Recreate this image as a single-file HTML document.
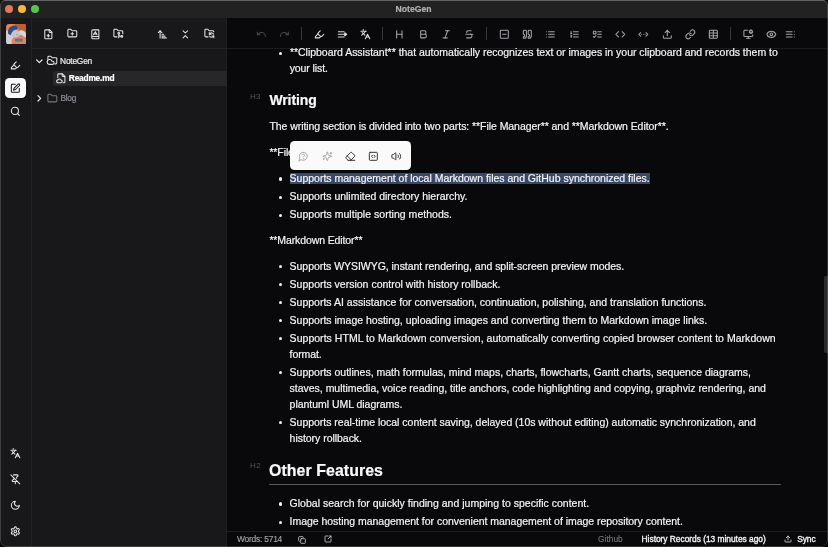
<!DOCTYPE html>
<html lang="en">
<head>
<meta charset="utf-8">
<title>NoteGen</title>
<style>
*{box-sizing:border-box;margin:0;padding:0}
html,body{width:828px;height:547px;overflow:hidden;background:#000}
body{font-family:"Liberation Sans",sans-serif;color:#f4f4f5;position:relative}
#win{position:absolute;left:0;top:0;width:828px;height:547px;background:#09090b;border-radius:5px 5px 6.5px 6.5px;overflow:hidden;will-change:transform}
#frame{position:absolute;left:0;top:0;width:828px;height:547px;border-radius:5px 5px 6.5px 6.5px;border:1px solid rgba(255,255,255,.17);border-top-color:rgba(255,255,255,.3);pointer-events:none}
#title{position:absolute;left:0;top:0;width:828px;height:17.8px;background:#222223}
.tl{position:absolute;top:5px;width:8.2px;height:8.2px;border-radius:50%}
#rail{position:absolute;left:0;top:17.8px;width:31.5px;height:530px;background:#18181b;border-right:1px solid #242427}
#side{position:absolute;left:31.5px;top:17.8px;width:195.5px;height:530px;background:#18181b;border-right:1px solid #202023}
#sidehead{position:absolute;left:31.5px;top:18px;width:195px;height:31px;border-bottom:1px solid #242427}
#status{position:absolute;left:227px;top:530.8px;width:601px;height:16.2px;border-top:1px solid #1c1c1f;background:#09090b}
svg.i{position:absolute;fill:none;stroke:#e4e4e7;color:#e4e4e7;stroke-width:2.35;stroke-linecap:round;stroke-linejoin:round;overflow:visible}
.t,.x{position:absolute;white-space:nowrap;font-size:10.5px;line-height:16px;color:#f4f4f5;-webkit-text-stroke:.2px currentColor}
.sel{background:linear-gradient(#3a4868,#3a4868) 0 2.7px/100% 11px no-repeat}
.bu{position:absolute;left:278.5px;width:3.1px;height:3.1px;border-radius:50%;background:#f4f4f5}
.sep{position:absolute;top:27.2px;width:1px;height:12.6px;background:#38383c}
#pop{position:absolute;left:289.6px;top:141.4px;width:121.6px;height:28.3px;background:#fafafa;border-radius:4.5px}
</style>
</head>
<body>
<div id="win">
<div id="title"><span class="tl" style="left:5px;background:#dd7a5d"></span><span class="tl" style="left:17.9px;background:#f3b745"></span><span class="tl" style="left:30.9px;background:#57c254"></span></div>
<span class="x" style="left:395.6px;top:3.1px;font-size:8.6px;line-height:12px;font-weight:bold;color:#b2b2b4">NoteGen</span>
<div id="rail"></div><div id="side"></div><div id="sidehead"></div>
<svg style="position:absolute;left:5.5px;top:23.6px;width:20.6px;height:20.5px" viewBox="0 0 40 40"><defs><clipPath id="av"><rect width="40" height="40" rx="6"/></clipPath></defs><g clip-path="url(#av)"><rect width="40" height="40" fill="#e1835c"/><path d="M16 0H40V18L33 14L27 13L22 7Z" fill="#b96231"/><path d="M0 13L5 12L9 20L15 26L11 31L11 40H0Z" fill="#cfd0d5"/><path d="M25 15C28 10 36 12 39 18L40 26L35 25L30 21L26 22Z" fill="#d4d5da"/><ellipse cx="17.5" cy="19" rx="8.5" ry="7.5" fill="#c6c7cc"/><path d="M4 19C2 10 9 3 16 3C21 3 24 7 22 10C16 10 11 14 9 22Z" fill="#2f4d80"/><path d="M20 19l3 2-2 2z" fill="#d46a3c"/><rect x="18.500" y="29.500" width="13" height="4" rx=".5" fill="#5f83a4" stroke="#3d4f63" stroke-width=".8"/></g></svg>
<svg class="i" viewBox="0 0 24 24" style="left:10.36px;top:59.76px;width:10.67px;height:10.67px"><path d="m9 11-6 6v3h9l3-3"/><path d="m22 12-4.6 4.6a2 2 0 0 1-2.8 0l-5.2-5.2a2 2 0 0 1 0-2.8L14 4"/></svg>
<div style="position:absolute;left:5.2px;top:77.8px;width:20.8px;height:20.6px;background:#fafafa;border-radius:4.5px"></div>
<svg class="i" viewBox="0 0 24 24" style="left:10.27px;top:82.77px;width:10.67px;height:10.67px;stroke:#18181b;color:#18181b"><path d="M12 3H5a2 2 0 0 0-2 2v14a2 2 0 0 0 2 2h14a2 2 0 0 0 2-2v-7"/><path d="M18.375 2.625a1 1 0 0 1 3 3l-9.013 9.014a2 2 0 0 1-.853.505l-2.873.840a.5.5 0 0 1-.620-.620l.840-2.873a2 2 0 0 1 .506-.852z"/></svg>
<svg class="i" viewBox="0 0 24 24" style="left:10.27px;top:105.97px;width:10.67px;height:10.67px"><circle cx="11" cy="11" r="8"/><path d="m21 21-4.300-4.300"/></svg>
<svg class="i" viewBox="0 0 24 24" style="left:10.27px;top:448.47px;width:10.67px;height:10.67px"><path d="m5 8 6 6"/><path d="m4 14 6-6 2-3"/><path d="M2 5h12"/><path d="M7 2h1"/><path d="m22 22-5-10-5 10"/><path d="M14 18h6"/></svg>
<svg class="i" viewBox="0 0 24 24" style="left:10.27px;top:474.27px;width:10.67px;height:10.67px"><path d="M12 17v5"/><path d="M15 9.340V7a1 1 0 0 1 1-1 2 2 0 0 0 0-4H7.890"/><path d="m2 2 20 20"/><path d="M9 9v1.760a2 2 0 0 1-1.110 1.790l-1.780.9A2 2 0 0 0 5 15.240V16a1 1 0 0 0 1 1h11"/></svg>
<svg class="i" viewBox="0 0 24 24" style="left:10.27px;top:500.27px;width:10.67px;height:10.67px"><path d="M12 3a6 6 0 0 0 9 9 9 9 0 1 1-9-9Z"/></svg>
<svg class="i" viewBox="0 0 24 24" style="left:10.27px;top:526.26px;width:10.67px;height:10.67px"><path d="M12.220 2h-.44a2 2 0 0 0-2 2v.180a2 2 0 0 1-1 1.730l-.430.250a2 2 0 0 1-2 0l-.150-.080a2 2 0 0 0-2.730.730l-.220.380a2 2 0 0 0 .730 2.730l.150.100a2 2 0 0 1 1 1.720v.510a2 2 0 0 1-1 1.740l-.150.090a2 2 0 0 0-.730 2.730l.220.380a2 2 0 0 0 2.730.730l.150-.080a2 2 0 0 1 2 0l.430.250a2 2 0 0 1 1 1.730V20a2 2 0 0 0 2 2h.440a2 2 0 0 0 2-2v-.180a2 2 0 0 1 1-1.730l.430-.250a2 2 0 0 1 2 0l.150.080a2 2 0 0 0 2.730-.730l.220-.390a2 2 0 0 0-.730-2.730l-.150-.080a2 2 0 0 1-1-1.740v-.5a2 2 0 0 1 1-1.740l.150-.090a2 2 0 0 0 .730-2.730l-.220-.380a2 2 0 0 0-2.730-.730l-.150.080a2 2 0 0 1-2 0l-.430-.250a2 2 0 0 1-1-1.730V4a2 2 0 0 0-2-2z"/><circle cx="12" cy="12" r="3"/></svg>
<svg class="i" viewBox="0 0 24 24" style="left:43.16px;top:28.56px;width:10.67px;height:10.67px"><path d="M15 2H6a2 2 0 0 0-2 2v16a2 2 0 0 0 2 2h12a2 2 0 0 0 2-2V7Z"/><path d="M14 2v4a2 2 0 0 0 2 2h4"/><path d="M9 15h6"/><path d="M12 18v-6"/></svg>
<svg class="i" viewBox="0 0 24 24" style="left:66.97px;top:28.27px;width:10.67px;height:10.67px"><path d="M12 10v6"/><path d="M9 13h6"/><path d="M20 20a2 2 0 0 0 2-2V8a2 2 0 0 0-2-2h-7.900a2 2 0 0 1-1.690-.9L9.600 3.900A2 2 0 0 0 7.930 3H4a2 2 0 0 0-2 2v13a2 2 0 0 0 2 2Z"/></svg>
<svg class="i" viewBox="0 0 24 24" style="left:89.67px;top:28.56px;width:10.67px;height:10.67px"><path d="M4 19.500v-15A2.500 2.500 0 0 1 6.500 2H19a1 1 0 0 1 1 1v18a1 1 0 0 1-1 1H6.500a1 1 0 0 1 0-5H20"/><path d="m8 13 4-7 4 7"/><path d="M9.100 11h5.700"/></svg>
<svg class="i" viewBox="0 0 24 24" style="left:112.97px;top:28.46px;width:10.67px;height:10.67px"><path d="M9 20H4a2 2 0 0 1-2-2V5a2 2 0 0 1 2-2h3.900a2 2 0 0 1 1.690.9l.810 1.200a2 2 0 0 0 1.670.9H20a2 2 0 0 1 2 2v5"/><circle cx="13" cy="12" r="2"/><path d="M18 19c-2.800 0-5-2.200-5-5v8"/><circle cx="20" cy="19" r="2"/></svg>
<svg class="i" viewBox="0 0 24 24" style="left:157.16px;top:28.56px;width:10.67px;height:10.67px"><path d="m3 8 4-4 4 4"/><path d="M7 4v16"/><path d="M11 12h4"/><path d="M11 16h7"/><path d="M11 20h10"/></svg>
<svg class="i" viewBox="0 0 24 24" style="left:180.36px;top:28.56px;width:10.67px;height:10.67px"><path d="m7 20 5-5 5 5"/><path d="m7 4 5 5 5-5"/></svg>
<svg class="i" viewBox="0 0 24 24" style="left:203.66px;top:28.46px;width:10.67px;height:10.67px"><path d="M9 20H4a2 2 0 0 1-2-2V5a2 2 0 0 1 2-2h3.900a2 2 0 0 1 1.690.9l.810 1.200a2 2 0 0 0 1.670.9H20a2 2 0 0 1 2 2v.5"/><path d="M12 10v4h4"/><path d="m12 14 1.535-1.605a5 5 0 0 1 8 1.500"/><path d="M22 22v-4h-4"/><path d="m22 18-1.535 1.605a5 5 0 0 1-8-1.500"/></svg>
<div style="position:absolute;left:53px;top:71.2px;width:173.5px;height:15px;background:#27272a;border-radius:2px 0 0 2px"></div>
<svg class="i" viewBox="0 0 24 24" style="left:34.16px;top:55.87px;width:10.67px;height:10.67px;stroke-width:2.8"><path d="m6 9 6 6 6-6"/></svg>
<svg class="i" viewBox="0 0 24 24" style="left:46.96px;top:55.46px;width:10.67px;height:10.67px"><path d="M17.500 20H20a2 2 0 0 0 2-2V8a2 2 0 0 0-2-2h-7.900a2 2 0 0 1-1.690-.9L9.600 3.900A2 2 0 0 0 7.930 3H4a2 2 0 0 0-2 2v5"/><path transform="translate(-1.100 6.300) scale(.78)" stroke-width="3" d="M17.500 19H9a7 7 0 1 1 6.710-9h1.790a4.500 4.500 0 1 1 0 9Z"/></svg>
<span class="x" style="left:60.1px;top:55.1px;font-size:8.4px;line-height:12px;color:#ececef;letter-spacing:-0.233px">NoteGen</span>
<svg class="i" viewBox="0 0 24 24" style="left:55.66px;top:73.27px;width:10.67px;height:10.67px"><path d="M4 10V4a2 2 0 0 1 2-2h8.500L20 7.500V20a2 2 0 0 1-2 2h-2"/><path d="M14 2v4a2 2 0 0 0 2 2h4"/><path d="M5.500 22H11a3 3 0 0 0 .3-5.980A4 4 0 0 0 4 15.500 3.300 3.300 0 0 0 5.500 22Z"/></svg>
<span class="x" style="left:68.8px;top:72.1px;font-size:8.4px;line-height:12px;font-weight:bold;color:#fff;letter-spacing:-0.220px">Readme.md</span>
<svg class="i" viewBox="0 0 24 24" style="left:34.37px;top:92.67px;width:10.67px;height:10.67px;stroke:#e4e4e7;color:#e4e4e7;stroke-width:2.8"><path d="m9 18 6-6-6-6"/></svg>
<svg class="i" viewBox="0 0 24 24" style="left:46.96px;top:92.77px;width:10.67px;height:10.67px;stroke:#75757c;color:#75757c"><path d="M20 20a2 2 0 0 0 2-2V8a2 2 0 0 0-2-2h-7.900a2 2 0 0 1-1.690-.9L9.600 3.900A2 2 0 0 0 7.930 3H4a2 2 0 0 0-2 2v13a2 2 0 0 0 2 2Z"/></svg>
<span class="x" style="left:60.4px;top:92.1px;font-size:8.4px;line-height:12px;color:#8b8b92;letter-spacing:-0.241px">Blog</span>
<div style="position:absolute;left:227px;top:17.8px;width:601px;height:30.2px;background:#09090b"></div><div style="position:absolute;left:227px;top:48.2px;width:601px;height:1px;background:#1b1b1e"></div>
<span class="t" style="left:289.9px;top:44.1px;letter-spacing:-0.017px">**Clipboard Assistant** that automatically recognizes text or images in your clipboard and records them to</span>
<span class="t" style="left:289.7px;top:60.1px;letter-spacing:-0.089px">your list.</span>
<span class="t" style="left:269.4px;top:118.1px;letter-spacing:-0.059px">The writing section is divided into two parts: **File Manager** and **Markdown Editor**.</span>
<span class="t" style="left:269.4px;top:144.1px;letter-spacing:-0.108px">**File Manager**</span>
<span class="t sel" style="left:289.6px;top:170.1px;font-size:10.5px;line-height:16px;letter-spacing:-0.009px">Supports management of local Markdown files and GitHub synchronized files.</span>
<span class="t" style="left:289.6px;top:188.1px;letter-spacing:-0.015px">Supports unlimited directory hierarchy.</span>
<span class="t" style="left:289.6px;top:206.1px;letter-spacing:0.021px">Supports multiple sorting methods.</span>
<span class="t" style="left:269.4px;top:232.1px;letter-spacing:-0.113px">**Markdown Editor**</span>
<span class="t" style="left:289.6px;top:258.1px;letter-spacing:-0.040px">Supports WYSIWYG, instant rendering, and split-screen preview modes.</span>
<span class="t" style="left:289.6px;top:276.1px;letter-spacing:0.005px">Supports version control with history rollback.</span>
<span class="t" style="left:289.6px;top:294.1px">Supports AI assistance for conversation, continuation, polishing, and translation functions.</span>
<span class="t" style="left:289.6px;top:312.1px;letter-spacing:-0.004px">Supports image hosting, uploading images and converting them to Markdown image links.</span>
<span class="t" style="left:289.6px;top:330.1px;letter-spacing:0.033px">Supports HTML to Markdown conversion, automatically converting copied browser content to Markdown</span>
<span class="t" style="left:289.6px;top:346.1px;letter-spacing:-0.098px">format.</span>
<span class="t" style="left:289.6px;top:364.1px;letter-spacing:-0.002px">Supports outlines, math formulas, mind maps, charts, flowcharts, Gantt charts, sequence diagrams,</span>
<span class="t" style="left:289.6px;top:380.1px;letter-spacing:-0.017px">staves, multimedia, voice reading, title anchors, code highlighting and copying, graphviz rendering, and</span>
<span class="t" style="left:289.6px;top:396.1px;letter-spacing:-0.032px">plantuml UML diagrams.</span>
<span class="t" style="left:289.6px;top:414.1px;letter-spacing:-0.019px">Supports real-time local content saving, delayed (10s without editing) automatic synchronization, and</span>
<span class="t" style="left:289.6px;top:430.1px;letter-spacing:-0.033px">history rollback.</span>
<span class="t" style="left:289.6px;top:495.1px;letter-spacing:0.011px">Global search for quickly finding and jumping to specific content.</span>
<span class="t" style="left:289.6px;top:513.1px;letter-spacing:-0.032px">Image hosting management for convenient management of image repository content.</span>
<i class="bu" style="top:51.95px"></i>
<i class="bu" style="top:177.45px"></i>
<i class="bu" style="top:195.55px"></i>
<i class="bu" style="top:213.65px"></i>
<i class="bu" style="top:265.35px"></i>
<i class="bu" style="top:283.35px"></i>
<i class="bu" style="top:301.35px"></i>
<i class="bu" style="top:319.35px"></i>
<i class="bu" style="top:337.35px"></i>
<i class="bu" style="top:371.35px"></i>
<i class="bu" style="top:421.15px"></i>
<i class="bu" style="top:502.45px"></i>
<i class="bu" style="top:520.65px"></i>
<span class="x" style="left:269.4px;top:90.1px;font-size:14px;line-height:20px;font-weight:bold;color:#fafafa;letter-spacing:-0.096px">Writing</span>
<span class="x" style="left:250.0px;top:91.6px;font-size:8px;line-height:10px;color:#55555b;letter-spacing:0.133px;-webkit-text-stroke:0">H3</span>
<span class="x" style="left:269.0px;top:458.6px;font-size:15.9px;line-height:24px;font-weight:bold;color:#fafafa;letter-spacing:0.068px">Other Features</span>
<span class="x" style="left:250.0px;top:460.6px;font-size:8px;line-height:10px;color:#55555b;letter-spacing:0.383px;-webkit-text-stroke:0">H2</span>
<div style="position:absolute;left:269px;top:484.3px;width:512px;height:1.2px;background:#59595e"></div>
<svg class="i" viewBox="0 0 24 24" style="left:255.97px;top:28.56px;width:10.67px;height:10.67px;stroke:#47474d;color:#47474d"><path d="M3 7v6h6"/><path d="M21 17a9 9 0 0 0-9-9 9 9 0 0 0-6 2.3L3 13"/></svg>
<svg class="i" viewBox="0 0 24 24" style="left:279.47px;top:28.56px;width:10.67px;height:10.67px;stroke:#47474d;color:#47474d"><path d="M21 7v6h-6"/><path d="M3 17a9 9 0 0 1 9-9 9 9 0 0 1 6 2.3l3 2.7"/></svg>
<svg class="i" viewBox="0 0 24 24" style="left:313.97px;top:28.56px;width:10.67px;height:10.67px;stroke:#dcdce0;color:#dcdce0"><path d="m9 11-6 6v3h9l3-3"/><path d="m22 12-4.6 4.6a2 2 0 0 1-2.8 0l-5.2-5.2a2 2 0 0 1 0-2.8L14 4"/></svg>
<svg class="i" viewBox="0 0 24 24" style="left:336.77px;top:28.56px;width:10.67px;height:10.67px;stroke:#dcdce0;color:#dcdce0"><path d="M3 6h13"/><path d="M3 12h15"/><path d="M3 18h13"/><path d="M17.5 8.5 22 12l-4.5 3.5z" fill="currentColor"/></svg>
<svg class="i" viewBox="0 0 24 24" style="left:360.17px;top:28.56px;width:10.67px;height:10.67px;stroke:#dcdce0;color:#dcdce0"><path d="m5 8 6 6"/><path d="m4 14 6-6 2-3"/><path d="M2 5h12"/><path d="M7 2h1"/><path d="m22 22-5-10-5 10"/><path d="M14 18h6"/></svg>
<svg class="i" viewBox="0 0 24 24" style="left:394.47px;top:28.56px;width:10.67px;height:10.67px;stroke:#a1a1a8;color:#a1a1a8"><path d="M6 12h12"/><path d="M6 20V4"/><path d="M18 20V4"/></svg>
<svg class="i" viewBox="0 0 24 24" style="left:417.97px;top:28.56px;width:10.67px;height:10.67px;stroke:#a1a1a8;color:#a1a1a8"><path d="M6 12h9a4 4 0 0 1 0 8H7a1 1 0 0 1-1-1V5a1 1 0 0 1 1-1h7a4 4 0 0 1 0 8"/></svg>
<svg class="i" viewBox="0 0 24 24" style="left:441.06px;top:28.56px;width:10.67px;height:10.67px;stroke:#a1a1a8;color:#a1a1a8"><line x1="19" x2="10" y1="4" y2="4"/><line x1="14" x2="5" y1="20" y2="20"/><line x1="15" x2="9" y1="4" y2="20"/></svg>
<svg class="i" viewBox="0 0 24 24" style="left:464.37px;top:28.56px;width:10.67px;height:10.67px;stroke:#a1a1a8;color:#a1a1a8"><path d="M16 4H9a3 3 0 0 0-2.83 4"/><path d="M14 12a4 4 0 0 1 0 8H6"/><line x1="4" x2="20" y1="12" y2="12"/></svg>
<svg class="i" viewBox="0 0 24 24" style="left:498.56px;top:28.56px;width:10.67px;height:10.67px;stroke:#a1a1a8;color:#a1a1a8"><rect width="18" height="18" x="3" y="3" rx="2"/><path d="M8 12h8"/></svg>
<svg class="i" viewBox="0 0 24 24" style="left:521.76px;top:28.56px;width:10.67px;height:10.67px;stroke:#a1a1a8;color:#a1a1a8"><path d="M16 3a2 2 0 0 0-2 2v6a2 2 0 0 0 2 2 1 1 0 0 1 1 1v1a2 2 0 0 1-2 2 1 1 0 0 0-1 1v2a1 1 0 0 0 1 1 6 6 0 0 0 6-6V5a2 2 0 0 0-2-2z"/><path d="M5 3a2 2 0 0 0-2 2v6a2 2 0 0 0 2 2 1 1 0 0 1 1 1v1a2 2 0 0 1-2 2 1 1 0 0 0-1 1v2a1 1 0 0 0 1 1 6 6 0 0 0 6-6V5a2 2 0 0 0-2-2z"/></svg>
<svg class="i" viewBox="0 0 24 24" style="left:545.46px;top:28.56px;width:10.67px;height:10.67px;stroke:#a1a1a8;color:#a1a1a8"><path d="M3 12h.01"/><path d="M3 18h.01"/><path d="M3 6h.01"/><path d="M8 12h13"/><path d="M8 18h13"/><path d="M8 6h13"/></svg>
<svg class="i" viewBox="0 0 24 24" style="left:568.76px;top:28.56px;width:10.67px;height:10.67px;stroke:#a1a1a8;color:#a1a1a8"><path d="M10 12h11"/><path d="M10 18h11"/><path d="M10 6h11"/><path d="M4 10h2"/><path d="M4 6h1v4"/><path d="M6 18H4c0-1 2-2 2-3s-1-1.5-2-1"/></svg>
<svg class="i" viewBox="0 0 24 24" style="left:591.87px;top:28.56px;width:10.67px;height:10.67px;stroke:#a1a1a8;color:#a1a1a8"><rect x="3" y="5" width="6" height="6" rx="1"/><path d="m3 17 2 2 4-4"/><path d="M13 6h8"/><path d="M13 12h8"/><path d="M13 18h8"/></svg>
<svg class="i" viewBox="0 0 24 24" style="left:615.16px;top:28.56px;width:10.67px;height:10.67px;stroke:#a1a1a8;color:#a1a1a8"><polyline points="16 18 22 12 16 6"/><polyline points="8 6 2 12 8 18"/></svg>
<svg class="i" viewBox="0 0 24 24" style="left:638.26px;top:28.56px;width:10.67px;height:10.67px;stroke:#a1a1a8;color:#a1a1a8"><path d="m18 8 4 4-4 4"/><path d="m6 8-4 4 4 4"/><path d="M8 12h.01"/><path d="M12 12h.01"/><path d="M16 12h.01"/></svg>
<svg class="i" viewBox="0 0 24 24" style="left:662.16px;top:28.56px;width:10.67px;height:10.67px;stroke:#a1a1a8;color:#a1a1a8"><path d="M21 15v4a2 2 0 0 1-2 2H5a2 2 0 0 1-2-2v-4"/><polyline points="17 8 12 3 7 8"/><line x1="12" x2="12" y1="3" y2="15"/></svg>
<svg class="i" viewBox="0 0 24 24" style="left:684.87px;top:28.56px;width:10.67px;height:10.67px;stroke:#a1a1a8;color:#a1a1a8"><path d="M10 13a5 5 0 0 0 7.54.54l3-3a5 5 0 0 0-7.07-7.07l-1.72 1.71"/><path d="M14 11a5 5 0 0 0-7.54-.54l-3 3a5 5 0 0 0 7.07 7.07l1.71-1.71"/></svg>
<svg class="i" viewBox="0 0 24 24" style="left:708.37px;top:28.56px;width:10.67px;height:10.67px;stroke:#a1a1a8;color:#a1a1a8"><path d="M12 3v18"/><rect width="18" height="18" x="3" y="3" rx="2"/><path d="M3 9h18"/><path d="M3 15h18"/></svg>
<svg class="i" viewBox="0 0 24 24" style="left:742.56px;top:28.56px;width:10.67px;height:10.67px;stroke:#a1a1a8;color:#a1a1a8"><path d="M12 17v4"/><path d="m15.2 4.9-.9-.4"/><path d="m15.2 7.1-.9.4"/><path d="m16.9 3.2-.4-.9"/><path d="m16.9 8.800-.4.900"/><path d="m19.500 2.300-.4.900"/><path d="m19.500 9.700-.4-.9"/><path d="m21.700 4.500-.9.400"/><path d="m21.700 7.500-.9-.4"/><path d="M22 13v2a2 2 0 0 1-2 2H4a2 2 0 0 1-2-2V5a2 2 0 0 1 2-2h7"/><path d="M8 21h8"/><circle cx="18" cy="6" r="3"/></svg>
<svg class="i" viewBox="0 0 24 24" style="left:765.66px;top:28.56px;width:10.67px;height:10.67px;stroke:#a1a1a8;color:#a1a1a8"><path d="M2.062 12.348a1 1 0 0 1 0-.696 10.750 10.750 0 0 1 19.876 0 1 1 0 0 1 0 .696 10.750 10.750 0 0 1-19.876 0"/><circle cx="12" cy="12" r="3"/></svg>
<i class="sep" style="left:301.0px"></i>
<i class="sep" style="left:381.8px"></i>
<i class="sep" style="left:485.9px"></i>
<i class="sep" style="left:730.0px"></i>
<svg class="i" viewBox="0 0 24 24" style="left:784.96px;top:28.56px;width:10.67px;height:10.67px;stroke:#a1a1a8;color:#a1a1a8"><path d="M16 12H3"/><path d="M16 18H3"/><path d="M16 6H3"/><path d="M21 12h.01"/><path d="M21 18h.01"/><path d="M21 6h.01"/></svg>
<div id="pop"></div>
<svg class="i" viewBox="0 0 24 24" style="left:298.17px;top:150.76px;width:10.67px;height:10.67px;stroke:#a3a3a8;color:#a3a3a8;stroke-width:2.1"><path d="M7.900 20A9 9 0 1 0 4 16.100L2 22Z"/><path d="M9.090 9a3 3 0 0 1 5.830 1c0 2-3 3-3 3"/><path d="M12 17h.01"/></svg>
<svg class="i" viewBox="0 0 24 24" style="left:321.67px;top:150.76px;width:10.67px;height:10.67px;stroke:#a3a3a8;color:#a3a3a8;stroke-width:2.1"><path d="M9.937 15.500A2 2 0 0 0 8.500 14.063l-6.135-1.582a.5.5 0 0 1 0-.962L8.500 9.936A2 2 0 0 0 9.937 8.500l1.582-6.135a.5.5 0 0 1 .963 0L14.063 8.500A2 2 0 0 0 15.500 9.937l6.135 1.581a.5.5 0 0 1 0 .964L15.500 14.063a2 2 0 0 0-1.437 1.437l-1.582 6.135a.5.5 0 0 1-.963 0z"/><path d="M20 3v4"/><path d="M22 5h-4"/><path d="M4 17v2"/><path d="M5 18H3"/></svg>
<svg class="i" viewBox="0 0 24 24" style="left:345.06px;top:150.76px;width:10.67px;height:10.67px;stroke:#27272a;color:#27272a;stroke-width:2.1"><path d="m7 21-4.300-4.300c-1-1-1-2.500 0-3.400l9.600-9.600c1-1 2.500-1 3.400 0l5.600 5.600c1 1 1 2.500 0 3.400L13 21"/><path d="M22 21H7"/><path d="m5 11 9 9"/></svg>
<svg class="i" viewBox="0 0 24 24" style="left:368.27px;top:150.76px;width:10.67px;height:10.67px;stroke:#27272a;color:#27272a;stroke-width:2.1"><path d="M10 9.500 8 12l2 2.500"/><path d="m14 9.500 2 2.500-2 2.500"/><rect width="18" height="18" x="3" y="3" rx="2"/></svg>
<svg class="i" viewBox="0 0 24 24" style="left:391.47px;top:150.76px;width:10.67px;height:10.67px;stroke:#27272a;color:#27272a;stroke-width:2.1"><path d="M11 4.702a.705.705 0 0 0-1.203-.498L6.413 7.587A1.400 1.400 0 0 1 5.416 8H3a1 1 0 0 0-1 1v6a1 1 0 0 0 1 1h2.416a1.400 1.400 0 0 1 .997.413l3.383 3.384A.705.705 0 0 0 11 19.298z"/><path d="M16 9a5 5 0 0 1 0 6"/><path d="M19.364 18.364a9 9 0 0 0 0-12.728"/></svg>
<div style="position:absolute;left:824px;top:276px;width:4px;height:77px;background:#2b2b2e;border-radius:2px 0 0 2px"></div>
<div id="status"></div>
<span class="x" style="left:236.9px;top:533.1px;font-size:8.4px;line-height:12px;color:#a1a1a8;letter-spacing:-0.195px;-webkit-text-stroke:.15px currentColor">Words: 5714</span>
<svg class="i" viewBox="0 0 24 24" style="left:298.00px;top:535.50px;width:8px;height:8px;stroke:#d4d4d8;color:#d4d4d8"><rect width="14" height="14" x="8" y="8" rx="2" ry="2"/><path d="M4 16c-1.100 0-2-.9-2-2V4c0-1.100.9-2 2-2h10c1.100 0 2 .9 2 2"/></svg>
<svg class="i" viewBox="0 0 24 24" style="left:323.70px;top:535.40px;width:8px;height:8px;stroke:#d4d4d8;color:#d4d4d8"><path d="M21 13v6a2 2 0 0 1-2 2H5a2 2 0 0 1-2-2V5a2 2 0 0 1 2-2h6"/><path d="m21 3-9 9"/><path d="M15 3h6v6"/></svg>
<span class="x" style="left:598.1px;top:533.1px;font-size:8.4px;line-height:12px;color:#77777e;letter-spacing:0.002px;-webkit-text-stroke:.1px currentColor">Github</span>
<span class="x" style="left:641.6px;top:533.1px;font-size:8.4px;line-height:12px;color:#f4f4f5;letter-spacing:-0.020px;-webkit-text-stroke:.35px currentColor">History Records (13 minutes ago)</span>
<svg class="i" viewBox="0 0 24 24" style="left:783.80px;top:535.10px;width:8px;height:8px;stroke:#e4e4e7;color:#e4e4e7"><path d="M21 15v4a2 2 0 0 1-2 2H5a2 2 0 0 1-2-2v-4"/><polyline points="17 8 12 3 7 8"/><line x1="12" x2="12" y1="3" y2="15"/></svg>
<span class="x" style="left:797.3px;top:533.1px;font-size:8.4px;line-height:12px;color:#f4f4f5;letter-spacing:-0.106px;-webkit-text-stroke:.35px currentColor">Sync</span>
<div id="frame"></div>
</div>
</body>
</html>
